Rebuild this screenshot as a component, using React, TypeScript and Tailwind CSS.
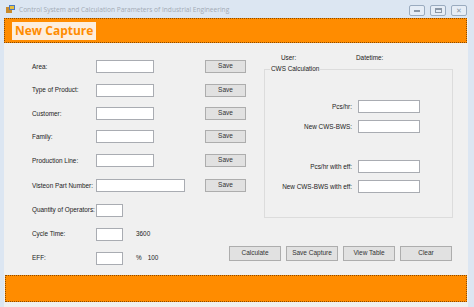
import React from "react";

const font = { fontFamily: '"Liberation Sans", Arial, sans-serif' };

const fields = [
  { label: "Area:", h: "h-[23px]", wide: false },
  { label: "Type of Product:", h: "h-[24px]", wide: false },
  { label: "Customer:", h: "h-[23px]", wide: false },
  { label: "Family:", h: "h-[23px]", wide: false },
  { label: "Production Line:", h: "h-[25px]", wide: false },
  { label: "Visteon Part Number:", h: "h-[25px]", wide: true },
];

const Box = ({ w = "w-[58px]" }: { w?: string }) => (
  <div className={`${w} h-[13px] bg-white border border-[#a9acb2]`} />
);

const Btn = ({ text, w }: { text: string; w: string }) => (
  <button
    className={`${w} h-[13px] bg-[#e1e1e1] border border-[#adadad] text-[6.5px] text-[#333] leading-none flex items-center justify-center`}
  >
    {text}
  </button>
);

const App = () => {
  return (
    <div
      className="w-[474px] h-[307px] bg-[#dce6f2] flex flex-col overflow-hidden"
      style={font}
    >
      {/* Title bar */}
      <div className="h-[18px] flex items-center pl-[6px] pr-[7px]">
        <svg width="9" height="8" viewBox="0 0 9 8">
          <rect x="0" y="2" width="6" height="6" fill="#c98a2a" />
          <rect x="3" y="0" width="6" height="5" fill="#4a78c0" />
          <rect x="4" y="1" width="4" height="3" fill="#e8c040" />
        </svg>
        <span
          className="ml-[4px] text-[6.6px] text-[#a3abb6] mt-[1px]"
          style={{ fontFamily: '"Open Sans", sans-serif' }}
        >
          Control System and Calculation Parameters of Industrial Engineering
        </span>
        <div className="ml-auto flex gap-[5px] mt-[2px]">
          <div className="w-[16px] h-[11px] border border-[#9aabbf] rounded-[2px] bg-[#e6edf6] flex items-center justify-center">
            <div className="w-[6px] h-[2px] bg-[#8b97a6] mt-[2px]" />
          </div>
          <div className="w-[16px] h-[11px] border border-[#9aabbf] rounded-[2px] bg-[#e6edf6] flex items-center justify-center">
            <div className="w-[7px] h-[5px] border border-[#8b97a6] border-t-2" />
          </div>
          <div className="w-[16px] h-[11px] border border-[#9aabbf] rounded-[2px] bg-[#e6edf6] flex items-center justify-center text-[7px] leading-none text-[#8b97a6]">
            ✕
          </div>
        </div>
      </div>

      {/* Client area */}
      <div className="ml-[4px] mr-[6px] flex-1 bg-[#f0f0f0] flex flex-col">
        <div className="h-[25px] mr-[1px] bg-[#ff8c00] border border-dotted border-[#8a4a00] flex items-center pl-[7px]">
          <div
            className="h-[18px] bg-[#fdeedd] px-[3px] flex items-center text-[12px] font-bold text-[#ff8c00]"
            style={{ fontFamily: '"Open Sans", sans-serif' }}
          >
            New Capture
          </div>
        </div>

        <div className="flex-1 flex text-[6.4px] text-[#222]">
          {/* Left column */}
          <div className="w-[260px] pl-[28px] pt-[12px] flex flex-col">
            {fields.map((f) => (
              <div key={f.label} className={`${f.h} flex items-center`}>
                <span className="w-[64px]">{f.label}</span>
                <div className="w-[109px]">
                  <Box w={f.wide ? "w-[89px]" : "w-[58px]"} />
                </div>
                <Btn text="Save" w="w-[41px]" />
              </div>
            ))}
            <div className="h-[24px] flex items-center">
              <span className="w-[64px]">Quantity of Operators:</span>
              <Box w="w-[27px]" />
            </div>
            <div className="h-[24px] flex items-center">
              <span className="w-[64px]">Cycle Time:</span>
              <Box w="w-[27px]" />
              <span className="ml-[13px]">3600</span>
            </div>
            <div className="h-[24px] flex items-center">
              <span className="w-[64px]">EFF:</span>
              <Box w="w-[27px]" />
              <span className="ml-[13px]">%</span>
              <span className="ml-[6px]">100</span>
            </div>
          </div>

          {/* Right column */}
          <div className="flex-1 flex flex-col pt-[11px]">
            <div className="flex h-[8px] items-center">
              <span className="ml-[17px] w-[75px]">User:</span>
              <span>Datetime:</span>
            </div>
            <fieldset className="mt-[4px] w-[189px] h-[152px] border border-[#dcdcdc] px-[4px] m-0">
              <legend className="px-[1px] ml-[1px] leading-none">CWS Calculation</legend>
              <div className="flex flex-col mt-[28px]">
                {[
                  ["Pcs/hr:", "mb-[7px]"],
                  ["New CWS-BWS:", "mb-[27px]"],
                  ["Pcs/hr with eff:", "mb-[7px]"],
                  ["New CWS-BWS with eff:", ""],
                ].map(([l, m]) => (
                  <div key={l} className={`flex items-center h-[13px] ${m}`}>
                    <span className="w-[89px] text-right pr-[6px]">{l}</span>
                    <Box w="w-[62px]" />
                  </div>
                ))}
              </div>
            </fieldset>
            <div className="flex gap-[5px] ml-[-35px] mt-[28px]">
              {["Calculate", "Save Capture", "View Table", "Clear"].map((t) => (
                <button
                  key={t}
                  className="w-[52px] h-[15px] bg-[#e1e1e1] border border-[#adadad] text-[6.5px] text-[#333] leading-none"
                >
                  {t}
                </button>
              ))}
            </div>
          </div>
        </div>

        <div className="h-[27px] mx-[1px] mb-[5px] bg-[#ff8c00] border border-dotted border-[#8a4a00]" />
      </div>
    </div>
  );
};

export default App;
